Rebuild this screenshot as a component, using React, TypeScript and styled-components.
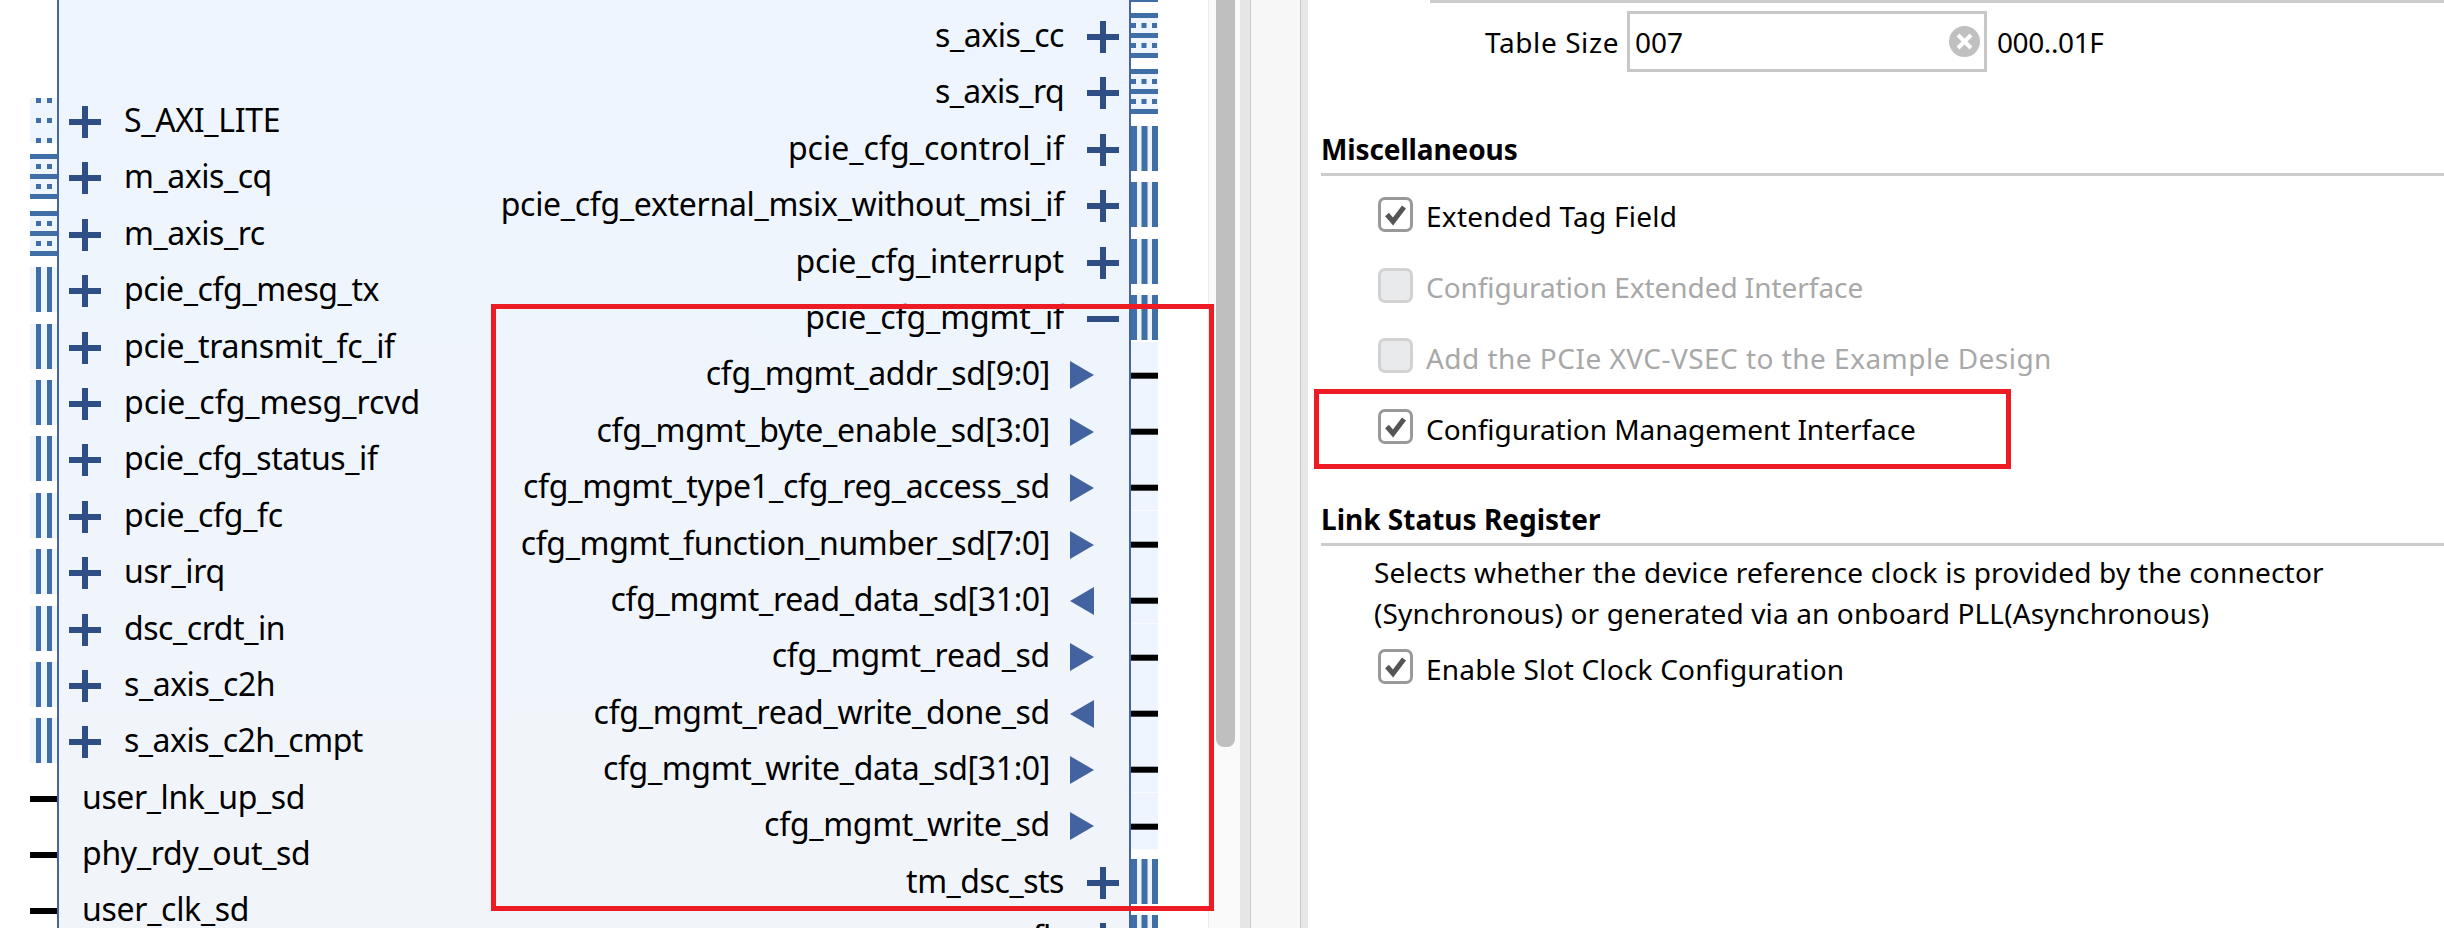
import React from 'react';
import styled, { createGlobalStyle } from 'styled-components';

const Global = createGlobalStyle`
  html, body { margin: 0; padding: 0; background: #fff; }
  body { font-family: "Noto Sans", "Open Sans", sans-serif; color: #000; }
  #root { width: 2444px; height: 928px; overflow: hidden; }
`;

const BLUE = '#3f6fa6';
const LIGHT = '#eef5fe';

const Page = styled.div`
  position: relative;
  display: flex;
  width: 2444px;
  height: 928px;
  overflow: hidden;
`;

const Canvas = styled.div`
  width: 1208px;
  height: 928px;
  flex: none;
  overflow: hidden;
  padding-left: 57px;
  box-sizing: border-box;
`;

const Symbol = styled.div`
  display: flex;
  justify-content: space-between;
  width: 1074px;
  height: 1100px;
  box-sizing: border-box;
  border-left: 2px solid #4566a4;
  border-right: 2px solid #4566a4;
  background: linear-gradient(180deg, #eef5fe 0, #f1f5fa 928px);
`;

const PortColumn = styled.div<{ $side: 'left' | 'right' }>`
  display: flex;
  flex-direction: column;
  align-items: ${(p) => (p.$side === 'left' ? 'flex-start' : 'flex-end')};
  margin-top: ${(p) => (p.$side === 'left' ? '93.8px' : '-47.6px')};
`;

const Port = styled.div<{ $side: 'left' | 'right' }>`
  display: flex;
  flex-direction: ${(p) => (p.$side === 'left' ? 'row' : 'row-reverse')};
  align-items: center;
  height: 56.4px;
`;

const PinSvg = styled.svg<{ $side: 'left' | 'right'; $tall?: boolean; $wire?: boolean }>`
  display: block;
  flex: none;
  width: 27px;
  height: ${(p) => (p.$tall ? '56.4px' : p.$wire ? '6px' : '45px')};
  margin-left: ${(p) => (p.$side === 'left' ? '-29px' : '2px')};
  margin-right: ${(p) => (p.$side === 'left' ? '2px' : '-29px')};
  margin-top: ${(p) => (p.$tall ? '-5.5px' : p.$wire ? '0' : '-3px')};
  align-self: ${(p) => (p.$tall ? 'flex-start' : 'center')};
  overflow: visible;
`;

const IconBox = styled.svg<{ $side: 'left' | 'right'; $tri?: boolean }>`
  display: block;
  flex: none;
  width: ${(p) => (p.$tri ? '24px' : '32px')};
  height: ${(p) => (p.$tri ? '28px' : '32px')};
  margin: ${(p) =>
    p.$side === 'left' ? '0 0 0 10px' : p.$tri ? '0 35px 0 0' : '0 10px 0 0'};
`;

const PortLabel = styled.span<{ $side: 'left' | 'right'; $tri?: boolean; $track: number }>`
  font-size: 32px;
  line-height: 40px;
  white-space: nowrap;
  letter-spacing: ${(p) => p.$track}px;
  margin: ${(p) =>
    p.$side === 'left' ? '-4px 0 0 23px' : p.$tri ? '-4px 20px 0 0' : '-4px 23px 0 0'};
`;

type PinKind = 'dots' | 'stream' | 'bus' | 'wire';

const xs = { left: [6, 17], right: [0, 10.5, 21] };

function Pin({ side, kind, tall }: { side: 'left' | 'right'; kind: PinKind; tall?: boolean }) {
  if (kind === 'wire') {
    if (tall) {
      return (
        <PinSvg $side={side} $tall viewBox="0 0 27 56.4" preserveAspectRatio="none">
          <rect width="27" height="56.4" fill={LIGHT} />
          <rect y="30.7" width="27" height="6" fill="#000" />
        </PinSvg>
      );
    }
    return (
      <PinSvg $side={side} $wire viewBox="0 0 27 6">
        <rect width="27" height="6" fill="#000" />
      </PinSvg>
    );
  }
  const cols = xs[side];
  return (
    <PinSvg $side={side} viewBox="0 0 27 45">
      <rect width="27" height="45" fill={LIGHT} />
      {kind === 'bus' && cols.map((x) => <rect key={x} x={x} width={side === 'left' ? 5 : 6} height="45" fill={BLUE} />)}
      {kind === 'dots' &&
        [0, 20, 40].map((y) => cols.map((x) => <rect key={`${x}-${y}`} x={x} y={y} width="5" height="5" fill={BLUE} />))}
      {kind === 'stream' && (
        <>
          {[0, 20, 40].map((y) => (
            <rect key={y} y={y} width="27" height="5" fill={BLUE} />
          ))}
          {[10, 30].map((y) => cols.map((x) => <rect key={`${x}-${y}`} x={x} y={y} width="5" height="5" fill={BLUE} />))}
        </>
      )}
    </PinSvg>
  );
}

type Glyph = 'plus' | 'minus' | 'in' | 'out' | 'none';

function PortIcon({ side, glyph }: { side: 'left' | 'right'; glyph: Glyph }) {
  if (glyph === 'none') return null;
  if (glyph === 'in' || glyph === 'out') {
    return (
      <IconBox $side={side} $tri viewBox="0 0 24 28">
        <path d={glyph === 'in' ? 'M0 0L24 14L0 28Z' : 'M24 0L0 14L24 28Z'} fill="#4362a0" />
      </IconBox>
    );
  }
  return (
    <IconBox $side={side} viewBox="0 0 32 32">
      <rect y="13" width="32" height="6" fill="#2f4e85" />
      {glyph === 'plus' && <rect x="13" width="6" height="32" fill="#2f4e85" />}
    </IconBox>
  );
}

type PortDef = { label?: string; kind: PinKind; glyph: Glyph; tall?: boolean; track?: number };

const leftPorts: PortDef[] = [
  { label: 'S_AXI_LITE', kind: 'dots', glyph: 'plus' },
  { label: 'm_axis_cq', kind: 'stream', glyph: 'plus', track: -0.45 },
  { label: 'm_axis_rc', kind: 'stream', glyph: 'plus', track: -0.45 },
  { label: 'pcie_cfg_mesg_tx', kind: 'bus', glyph: 'plus', track: -0.4 },
  { label: 'pcie_transmit_fc_if', kind: 'bus', glyph: 'plus' },
  { label: 'pcie_cfg_mesg_rcvd', kind: 'bus', glyph: 'plus', track: -0.04 },
  { label: 'pcie_cfg_status_if', kind: 'bus', glyph: 'plus', track: -0.4 },
  { label: 'pcie_cfg_fc', kind: 'bus', glyph: 'plus' },
  { label: 'usr_irq', kind: 'bus', glyph: 'plus' },
  { label: 'dsc_crdt_in', kind: 'bus', glyph: 'plus', track: -0.45 },
  { label: 's_axis_c2h', kind: 'bus', glyph: 'plus', track: -0.45 },
  { label: 's_axis_c2h_cmpt', kind: 'bus', glyph: 'plus', track: -0.5 },
  { label: 'user_lnk_up_sd', kind: 'wire', glyph: 'none', track: -0.4 },
  { label: 'phy_rdy_out_sd', kind: 'wire', glyph: 'none' },
  { label: 'user_clk_sd', kind: 'wire', glyph: 'none' },
];

const rightPorts: PortDef[] = [
  { kind: 'stream', glyph: 'none' },
  { label: 's_axis_cc', kind: 'stream', glyph: 'plus', track: -0.45 },
  { label: 's_axis_rq', kind: 'stream', glyph: 'plus', track: -0.6 },
  { label: 'pcie_cfg_control_if', kind: 'bus', glyph: 'plus', track: 0.03 },
  { label: 'pcie_cfg_external_msix_without_msi_if', kind: 'bus', glyph: 'plus' },
  { label: 'pcie_cfg_interrupt', kind: 'bus', glyph: 'plus', track: -0.13 },
  { label: 'pcie_cfg_mgmt_if', kind: 'bus', glyph: 'minus', track: -0.1 },
  { label: 'cfg_mgmt_addr_sd[9:0]', kind: 'wire', glyph: 'in', tall: true, track: -0.35 },
  { label: 'cfg_mgmt_byte_enable_sd[3:0]', kind: 'wire', glyph: 'in', tall: true },
  { label: 'cfg_mgmt_type1_cfg_reg_access_sd', kind: 'wire', glyph: 'in', tall: true, track: -0.25 },
  { label: 'cfg_mgmt_function_number_sd[7:0]', kind: 'wire', glyph: 'in', tall: true, track: -0.35 },
  { label: 'cfg_mgmt_read_data_sd[31:0]', kind: 'wire', glyph: 'out', tall: true, track: -0.35 },
  { label: 'cfg_mgmt_read_sd', kind: 'wire', glyph: 'in', tall: true },
  { label: 'cfg_mgmt_read_write_done_sd', kind: 'wire', glyph: 'out', tall: true },
  { label: 'cfg_mgmt_write_data_sd[31:0]', kind: 'wire', glyph: 'in', tall: true, track: -0.35 },
  { label: 'cfg_mgmt_write_sd', kind: 'wire', glyph: 'in', tall: true },
  { label: 'tm_dsc_sts', kind: 'bus', glyph: 'plus', track: -0.45 },
  { label: 'usr_flr', kind: 'bus', glyph: 'plus' },
];

function PortRow({ side, def }: { side: 'left' | 'right'; def: PortDef }) {
  const tri = def.glyph === 'in' || def.glyph === 'out';
  return (
    <Port $side={side}>
      <Pin side={side} kind={def.kind} tall={def.tall} />
      <PortIcon side={side} glyph={def.glyph} />
      {def.label && (
        <PortLabel $side={side} $tri={tri} $track={def.track ?? -0.3}>
          {def.label}
        </PortLabel>
      )}
    </Port>
  );
}

const Scrollbar = styled.div`
  width: 32px;
  height: 928px;
  flex: none;
  box-sizing: border-box;
  background: #fafafa;
  border-left: 1px solid #ececec;
  padding-left: 7px;
`;

const Thumb = styled.div`
  width: 19px;
  height: 747px;
  background: #bfbfbf;
  border-radius: 0 0 8px 8px;
`;

const Splitter = styled.div`
  width: 68px;
  height: 928px;
  flex: none;
  box-sizing: border-box;
  background: #f7f7f7;
  border-left: 10px solid #e6e6e6;
  border-right: 7px solid #e6e6e6;
  display: flex;
  justify-content: space-between;
`;

const SplitLine = styled.div`
  width: 1px;
  height: 100%;
  background: #c8c8c8;
`;

const Settings = styled.div`
  flex: 1;
  min-width: 0;
  padding-left: 13px;
  font-size: 28px;
`;

const TopRule = styled.div`
  height: 3px;
  margin-left: 109px;
  background: #cccccc;
`;

const TableRow = styled.div`
  display: flex;
  align-items: center;
  height: 61px;
  margin-top: 8px;
  padding-left: 164px;
`;

const FieldLabel = styled.span`
  width: 142px;
  flex: none;
  white-space: nowrap;
  letter-spacing: 0.6px;
`;

const Field = styled.div`
  display: flex;
  align-items: center;
  justify-content: space-between;
  box-sizing: border-box;
  width: 360px;
  height: 61px;
  border: 3px solid #c8c8c8;
  padding: 0 4px 0 5px;
  background: #fff;
`;

const FieldHint = styled.span`
  margin-left: 10px;
  white-space: nowrap;
  letter-spacing: -0.4px;
`;

const ClearIcon = styled.svg`
  width: 31px;
  height: 31px;
  display: block;
  flex: none;
`;

const SectionTitle = styled.h2<{ $gap: number; $track: number }>`
  margin: ${(p) => p.$gap}px 0 3px;
  height: 46px;
  box-sizing: border-box;
  font-size: 28px;
  font-weight: 700;
  line-height: 38px;
  border-bottom: 3px solid #cccccc;
  letter-spacing: ${(p) => p.$track}px;
  white-space: nowrap;
`;

const CheckRow = styled.div<{ $disabled?: boolean }>`
  display: flex;
  align-items: center;
  height: 70.8px;
  padding-left: 57px;
  color: ${(p) => (p.$disabled ? '#a8a8a8' : '#000')};
`;

const Box = styled.span<{ $disabled?: boolean }>`
  display: block;
  flex: none;
  width: 35px;
  height: 35px;
  box-sizing: border-box;
  border: 3px solid ${(p) => (p.$disabled ? '#d2d2d2' : '#999999')};
  border-radius: 7px;
  background: ${(p) => (p.$disabled ? '#e9eaec' : '#fff')};
`;

const Tick = styled.svg`
  display: block;
  width: 29px;
  height: 29px;
`;

const CheckText = styled.span<{ $track: number }>`
  margin-left: 13px;
  white-space: nowrap;
  transform: translateY(2px);
  letter-spacing: ${(p) => p.$track}px;
`;

const Description = styled.p`
  margin: 5.5px 0 0;
  padding-left: 53px;
  height: 79.5px;
  line-height: 41px;
  white-space: nowrap;
`;

const DescLine = styled.span<{ $track: number }>`
  display: block;
  letter-spacing: ${(p) => p.$track}px;
`;

const Highlight = styled.div<{ $l: number; $t: number; $w: number; $h: number }>`
  position: absolute;
  left: ${(p) => p.$l}px;
  top: ${(p) => p.$t}px;
  width: ${(p) => p.$w}px;
  height: ${(p) => p.$h}px;
  box-sizing: border-box;
  border: 5px solid #ed1c24;
  pointer-events: none;
`;

function Check({ label, checked, disabled, track = 0 }: { label: string; checked?: boolean; disabled?: boolean; track?: number }) {
  return (
    <CheckRow $disabled={disabled}>
      <Box $disabled={disabled}>
        {checked && (
          <Tick viewBox="0 0 29 29">
            <path d="M6 14.5L12 21.5L23 7" fill="none" stroke="#555" strokeWidth="5" />
          </Tick>
        )}
      </Box>
      <CheckText $track={track}>{label}</CheckText>
    </CheckRow>
  );
}

export default function App() {
  return (
    <>
      <Global />
      <Page>
        <Canvas>
          <Symbol>
            <PortColumn $side="left">
              {leftPorts.map((d) => (
                <PortRow key={d.label} side="left" def={d} />
              ))}
            </PortColumn>
            <PortColumn $side="right">
              {rightPorts.map((d, i) => (
                <PortRow key={i} side="right" def={d} />
              ))}
            </PortColumn>
          </Symbol>
        </Canvas>
        <Scrollbar>
          <Thumb />
        </Scrollbar>
        <Splitter>
          <SplitLine />
          <SplitLine />
        </Splitter>
        <Settings>
          <TopRule />
          <TableRow>
            <FieldLabel>Table Size</FieldLabel>
            <Field>
              <span>007</span>
              <ClearIcon viewBox="0 0 31 31">
                <circle cx="15.5" cy="15.5" r="15.5" fill="#c0c0c0" />
                <path d="M9 9L22 22M22 9L9 22" stroke="#fff" strokeWidth="4" />
              </ClearIcon>
            </Field>
            <FieldHint>000..01F</FieldHint>
          </TableRow>
          <SectionTitle $gap={58} $track={-0.12}>Miscellaneous</SectionTitle>
          <Check label="Extended Tag Field" checked track={0.26} />
          <Check label="Configuration Extended Interface" disabled track={-0.05} />
          <Check label="Add the PCIe XVC-VSEC to the Example Design" disabled track={0.47} />
          <Check label="Configuration Management Interface" checked track={-0.05} />
          <SectionTitle $gap={38} $track={0}>Link Status Register</SectionTitle>
          <Description>
            <DescLine $track={0.2}>Selects whether the device reference clock is provided by the connector</DescLine>
            <DescLine $track={0.13}>(Synchronous) or generated via an onboard PLL(Asynchronous)</DescLine>
          </Description>
          <Check label="Enable Slot Clock Configuration" checked track={0.2} />
        </Settings>
        <Highlight $l={491} $t={304} $w={723} $h={607} />
        <Highlight $l={1314} $t={389} $w={697} $h={80} />
      </Page>
    </>
  );
}
